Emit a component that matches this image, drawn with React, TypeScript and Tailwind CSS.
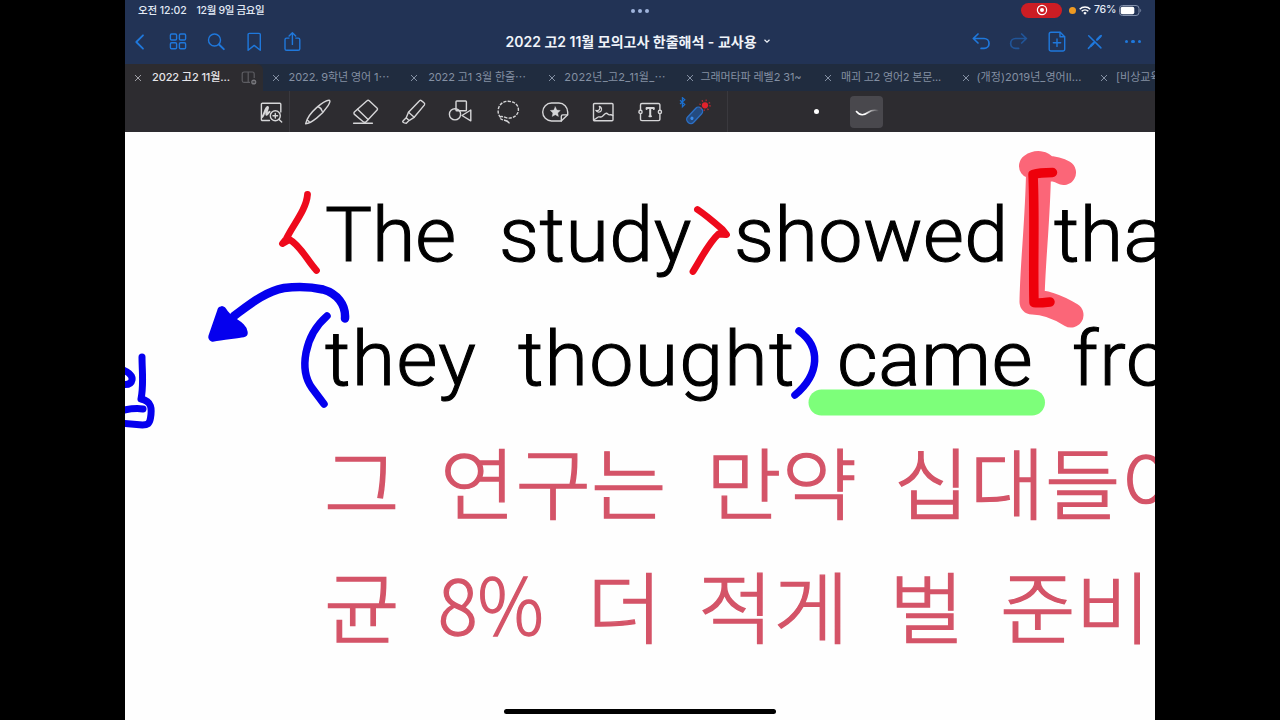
import React from 'react';

type IconProps = {
  children: React.ReactNode;
  className?: string;
};

// 24px stroke icon, drawn in the current text colour
function Icon({ children, className = 'size-6' }: IconProps) {
  return (
    <svg
      viewBox="0 0 24 24"
      fill="none"
      stroke="currentColor"
      strokeWidth="1.4"
      strokeLinecap="round"
      strokeLinejoin="round"
      className={`shrink-0 ${className}`}
    >
      {children}
    </svg>
  );
}

const leftActions = [
  { title: 'back', icon: <path d="M15 5.300 8.300 12 15 18.700" strokeWidth="1.800" /> },
  {
    title: 'grid',
    icon: (
      <>
        <rect x="4.400" y="4" width="6.200" height="6" rx="1.200" />
        <rect x="13.400" y="4" width="6.200" height="6" rx="1.200" />
        <rect x="4.400" y="12.700" width="6.200" height="6" rx="1.200" />
        <rect x="13.400" y="12.700" width="6.200" height="6" rx="1.200" />
      </>
    ),
  },
  {
    title: 'search',
    icon: (
      <>
        <circle cx="10.500" cy="10" r="6" />
        <path d="m15 14.500 4.800 4.600" strokeWidth="2" />
      </>
    ),
  },
  {
    title: 'bookmark',
    icon: <path d="M7.300 3.400h9.800a1.200 1.200 0 0 1 1.200 1.200v15.600L12.200 15.400l-6.100 4.800V4.600a1.200 1.200 0 0 1 1.200-1.200Z" />,
  },
  {
    title: 'share',
    icon: (
      <>
        <path d="M9 8.100H6.600A1.600 1.600 0 0 0 5 9.700v9a1.600 1.600 0 0 0 1.600 1.600h11.600a1.600 1.600 0 0 0 1.600-1.600v-9a1.600 1.600 0 0 0-1.600-1.600h-2.400" />
        <path d="M12.400 14.400V3M9.100 6l3.300-3.300L15.700 6" />
      </>
    ),
  },
];

const rightActions = [
  {
    title: 'undo',
    color: 'text-[#1f78dc]',
    icon: <path d="M9 4 4.300 8.500 9 13M4.600 8.500h10.500a4.900 4.900 0 0 1 0 9.900h-3" strokeWidth="1.700" />,
  },
  {
    title: 'redo',
    color: 'text-[#215599]',
    icon: <path d="m14.700 4 4.700 4.500-4.700 4.500M19.100 8.500H8.600a4.900 4.900 0 0 0 0 9.900h3" strokeWidth="1.700" />,
  },
  {
    title: 'add page',
    color: 'text-[#1f78dc]',
    icon: (
      <>
        <path d="M6 2.300h9.200l4.500 4.500v12.400a1.800 1.800 0 0 1-1.800 1.800H6a1.800 1.800 0 0 1-1.800-1.800V4.100A1.800 1.800 0 0 1 6 2.300Z" />
        <path d="M15 2.500v4.300h4.500M12 9v7.400M8.300 12.700h7.400" />
      </>
    ),
  },
  {
    title: 'read only',
    color: 'text-[#1f78dc]',
    icon: (
      <>
        <path d="m5.700 5.700 12.200 12.200" strokeWidth="1.500" />
        <path d="m5.400 18.400 6-6M13.800 10l4.400-4.400" strokeWidth="1.500" />
        <path d="m7.800 15.900 2.800-2.800M14.400 9.400l3-3" strokeWidth="2.200" />
      </>
    ),
  },
];

const tabs = [
  { title: '2022. 9학년 영어 1⋯', tracking: 'tracking-[-0.1px]' },
  { title: '2022 고1 3월 한줄⋯', tracking: 'tracking-[-0.1px]' },
  { title: '2022년_고2_11월_⋯', tracking: 'tracking-[0.25px]' },
  { title: '그래머타파 레벨2 31~', tracking: 'tracking-[-0.1px] -ml-0.5' },
  { title: '매괴 고2 영어2 본문...', tracking: 'tracking-[-0.2px]' },
  { title: '(개정)2019년_영어II...', tracking: 'tracking-[0.05px]' },
];

const tools = [
  {
    title: 'pen',
    icon: (
      <>
        <path d="M-.4 23.800C.8 18.500 5 12.500 10.600 7.600 15.500 3.300 20.500.2 23 .2c1.600.2.900 2.600-.9 5.400-3 4.600-7 9.100-11.200 12.300C6.800 21.200 2.800 23.600-.4 23.800Z" />
        <path d="M12 6.500c2 .8 3.600 2.600 4.300 4.900M1.600 20.300c.8.400 1.500 1.100 1.900 2" />
      </>
    ),
  },
  {
    title: 'eraser',
    icon: (
      <>
        <path d="M16.200.7 24 7.900a1.600 1.600 0 0 1 .1 2.200L13.400 21.400a2.500 2.500 0 0 1-3.500.1L1.500 14.400a1.600 1.600 0 0 1-.1-2.300L14 .8a1.600 1.600 0 0 1 2.200-.1Z" />
        <path d="m4.500 9.300 10.600 10.200M.6 23.300h18.800" />
      </>
    ),
  },
  {
    title: 'highlighter',
    icon: (
      <>
        <path d="M20.300.6 23 2.800a1.700 1.700 0 0 1 .3 2.300L13.200 17.300 7.500 12.300 18.300.9a1.400 1.400 0 0 1 2-.3Z" />
        <path d="m7.500 12.300-2.300 5.500L8 20.600l5.200-3.300M5.200 17.800 2 21c-.7.9 0 1.600 1.300 1.900l2 .3L8 20.600" />
      </>
    ),
  },
  {
    title: 'shapes',
    icon: (
      <>
        <rect x="8" y="1" width="10.400" height="9.800" rx=".8" />
        <circle cx="7" cy="14.300" r="5.600" />
        <path d="M22.800 10v10.800L14 15.500Z" />
      </>
    ),
  },
  {
    title: 'lasso',
    icon: (
      <>
        <path d="M4.600 17.500C-.4 12.500 2.300 1.300 12 1.300c6.500 0 10.400 3.600 10.400 8.400 0 6.300-6.600 9.600-12.300 8-3.300-1-5.400-2-6-.6-.5 1.600 2 2.700 4.700 3.300" strokeDasharray="3.200 1.200" strokeLinecap="butt" />
        <path d="M8.600 20.300c2 .4 3.500 1 4.500 2.700" />
      </>
    ),
  },
  {
    title: 'sticker',
    icon: (
      <>
        <path d="M18.200 21H8.500a8.800 9 0 0 1 0-18h7.400a8.800 9 0 0 1 8.800 9v2.700Z" />
        <path d="M24.500 14.900h-4.700a1.500 1.500 0 0 0-1.500 1.500V21" />
        <path d="m12.300 6.800 1.500 3.300 3.500.4-2.600 2.400.7 3.500-3.100-1.700-3.100 1.700.7-3.500-2.600-2.400 3.500-.4Z" fill="currentColor" strokeWidth=".4" />
      </>
    ),
  },
  {
    title: 'image',
    icon: (
      <>
        <rect x="2.500" y="3.500" width="19.500" height="17.200" rx="1" />
        <path d="M3 19.500c2.300-.4 3-2.300 4.600-2.600 1.700-.2 2.200.6 3.600-.4 1.900-1.400 2.800-3.400 4.200-3.200 1.300.2 1.600 1.600 3 1.600s2.100-.6 3.300.6" />
        <path d="M8.300 6.300c1.600 2.400-.3 5-3.500 4 1.200 2.600 5.200 2.300 5.700-.4.200-1.600-.6-3.100-2.200-3.600Z" strokeWidth="1.200" />
      </>
    ),
  },
  {
    title: 'text',
    icon: (
      <>
        <path d="M2.500 10V4.900a1.400 1.400 0 0 1 1.400-1.400h16.600a1.400 1.400 0 0 1 1.400 1.400V10M2.500 13.800v5.400a1.400 1.400 0 0 0 1.400 1.400h16.600a1.400 1.400 0 0 0 1.400-1.400v-5.400" />
        <circle cx="2.500" cy="11.900" r="1.600" />
        <circle cx="21.900" cy="11.900" r="1.600" />
        <path d="M8.600 8.900V8h7.200v.9M12.200 8v8.200M11.400 16.200H13" strokeWidth="2" />
      </>
    ),
  },
];

type Word = {
  text: string;
  className: string;
};

const englishLines: Word[][] = [
  [
    { text: 'The', className: 'w-[174px] tracking-[-0.1px]' },
    { text: 'study', className: 'w-[235px] tracking-[0.5px]' },
    { text: 'showed', className: 'w-[320px] tracking-[0.4px]' },
    { text: 'tha', className: 'w-[120px] tracking-[0.3px]' },
  ],
  [
    { text: 'they', className: 'w-[193px] tracking-[1.4px]' },
    { text: 'thought', className: 'w-[319px] tracking-[1.2px]' },
    { text: 'came', className: 'w-[235px] tracking-[0.5px]' },
    { text: 'fro', className: 'w-[120px] tracking-[1px]' },
  ],
];

const koreanLines: Word[][] = [
  [
    { text: '그', className: 'w-[116px]' },
    { text: '연구는', className: 'w-[266px]' },
    { text: '만약', className: 'w-[188px]' },
    { text: '십대들이', className: 'w-[300px]' },
  ],
  [
    { text: '균', className: 'w-[114px]' },
    { text: '8%', className: 'w-[149px] scale-x-90 -translate-y-[3px]' },
    { text: '더', className: 'w-[111px]' },
    { text: '적게', className: 'w-[191px]' },
    { text: '벌', className: 'w-[111px]' },
    { text: '준비', className: 'w-[160px]' },
  ],
];

function StatusBar() {
  return (
    <div className="grid h-5 grid-cols-[1fr_auto_1fr] items-center text-[10.5px] font-medium text-[#e3eaf5]">
      <div className="flex gap-2.5 pt-px pl-[13px] tracking-[-0.1px]">
        <span>오전 12:02</span>
        <span className="tracking-[-0.35px]">12월 9일 금요일</span>
      </div>
      <div className="flex gap-[3px] pt-0.5">
        <i className="size-1 rounded-full bg-[#9fb4dc]" />
        <i className="size-1 rounded-full bg-[#9fb4dc]" />
        <i className="size-1 rounded-full bg-[#9fb4dc]" />
      </div>
      <div className="flex items-center justify-end pr-[13px]">
        <div className="flex h-[15px] w-[41px] items-center justify-center rounded-full bg-[#cc1d24]">
          <svg viewBox="0 0 12 12" className="size-3">
            <circle cx="6" cy="6" r="4.600" fill="none" stroke="#fff" strokeWidth="1.200" />
            <circle cx="6" cy="6" r="2" fill="#fff" />
          </svg>
        </div>
        <i className="ml-[7px] size-[7px] rounded-full bg-[#ee9a22]" />
        <svg viewBox="0 0 12 9" className="ml-[3px] h-[9px] w-3" fill="none" stroke="#fff" strokeWidth="1.500">
          <path d="M.7 3.200a7.500 7.500 0 0 1 10.600 0M2.700 5.300a4.700 4.700 0 0 1 6.600 0" />
          <path d="M4.300 6.900a2.400 2.400 0 0 1 3.400 0L6 8.700Z" fill="#fff" stroke="none" />
        </svg>
        <span className="ml-[3px] w-[23px] whitespace-nowrap tracking-tight">76%</span>
        <svg viewBox="0 0 23 11" className="ml-0.5 h-[11px] w-[23px]">
          <rect x=".5" y=".5" width="19.500" height="10" rx="3" fill="none" stroke="#8391ad" />
          <rect x="1.700" y="1.700" width="13.600" height="7.600" rx="1.800" fill="#fff" />
          <path d="M21.300 3.800v3.400c1.200-.6 1.200-2.800 0-3.400Z" fill="#8391ad" />
        </svg>
      </div>
    </div>
  );
}

function Header() {
  return (
    <div className="grid h-11 grid-cols-[1fr_auto_1fr] items-center">
      <div className="-ml-1 flex text-[#1f78dc]">
        {leftActions.map((action) => (
          <div key={action.title} className="flex w-[38px] justify-center">
            <Icon>{action.icon}</Icon>
          </div>
        ))}
      </div>
      <div className="flex items-center gap-1.5 pr-1 pb-0.5 text-[14px] font-semibold whitespace-nowrap text-[#f0f4fa]">
        <span>2022 고2 11월 모의고사 한줄해석 - 교사용</span>
        <svg viewBox="0 0 8 8" className="size-2" fill="none" stroke="currentColor" strokeWidth="1.200">
          <path d="m1.500 2.800 2.500 2.400 2.500-2.400" />
        </svg>
      </div>
      <div className="flex justify-end pr-[3px]">
        {rightActions.map((action) => (
          <div key={action.title} className={`flex w-[38px] justify-center ${action.color}`}>
            <Icon>{action.icon}</Icon>
          </div>
        ))}
        <div className="flex h-[23px] w-[38px] items-center justify-center gap-[3px]">
          <i className="size-[3.5px] rounded-full bg-[#1f78dc]" />
          <i className="size-[3.5px] rounded-full bg-[#1f78dc]" />
          <i className="size-[3.5px] rounded-full bg-[#1f78dc]" />
        </div>
      </div>
    </div>
  );
}

function CloseIcon() {
  return (
    <svg viewBox="0 0 8 8" className="size-2 shrink-0" fill="none" stroke="currentColor" strokeWidth="1">
      <path d="m1 1 6 6M7 1 1 7" />
    </svg>
  );
}

function Tabs() {
  return (
    <div className="flex h-[27px] overflow-hidden bg-[#202c3f] text-[11px] whitespace-nowrap text-[#8490a3]">
      <div className="flex w-[138px] shrink-0 items-center rounded-tr-md bg-[#2d2c30] pl-[9px] text-[#e6e6ea]">
        <span className="text-[#a0a0a6]">
          <CloseIcon />
        </span>
        <span className="ml-2.5 w-[89px] font-medium tracking-[-0.1px]">2022 고2 11월...</span>
        <svg viewBox="0 0 16 14" className="h-3.5 w-4" fill="none" stroke="#5d5d62" strokeWidth="1.200">
          <path d="M9 11.400H3a1.800 1.800 0 0 1-1.800-1.800V2.800A1.800 1.800 0 0 1 3 1h8.400a1.800 1.800 0 0 1 1.800 1.800V7M7.200 1v10.400" />
          <circle cx="12.800" cy="11" r="2.600" fill="#77777c" stroke="none" />
          <path d="M11.500 11h2.600" stroke="#2d2c30" />
        </svg>
      </div>
      {tabs.map((tab) => (
        <div key={tab.title} className="flex w-[138px] shrink-0 items-center pl-[9px]">
          <CloseIcon />
          <span className={`w-[118px] text-center ${tab.tracking}`}>{tab.title}</span>
        </div>
      ))}
      <div className="flex w-[138px] shrink-0 items-center pl-[9px]">
        <CloseIcon />
        <span className="ml-2">[비상교육</span>
      </div>
    </div>
  );
}

function Toolbar() {
  return (
    <div className="flex h-[41px] items-center bg-[#2d2c30] text-[#d6d6d8]">
      <div className="ml-[134px] flex h-full w-[31px] items-center border-r border-[#3a393e]">
        <Icon>
          <path d="M10.500 20.500H3.400a1 1 0 0 1-1-1V4.200a1 1 0 0 1 1-1h17.400a1 1 0 0 1 1 1V12" />
          <path d="M3.300 17C5.300 14.500 6.500 7.300 8.500 7c1.800-.2-2.400 7.300-1 7.800 1.100.3 1.600-2.300 3-3" strokeWidth="2" />
          <circle cx="16.300" cy="15.700" r="5" />
          <path d="M14 15.700h4.600M16.300 13.400V18M20 19.400l2.700 2.700" />
        </Icon>
      </div>
      <div className="ml-1 flex">
        {tools.map((tool) => (
          <div key={tool.title} className="flex w-[47.5px] justify-center">
            <Icon className="size-6 overflow-visible">{tool.icon}</Icon>
          </div>
        ))}
      </div>
      <div className="flex h-full w-[54px] items-center border-r border-[#3a393e] pl-[5px]">
        <svg viewBox="0 0 34 30" className="h-[30px] w-[34px] shrink-0" fill="none">
          <path d="m1 3.200 4.800 4.300-2.400 2.300V.6L5.800 2.700 1 7" stroke="#1b6fce" strokeWidth="1.200" />
          <g transform="rotate(-47 16 18)">
            <rect x="6" y="14" width="19" height="8" rx="3.500" fill="#244b80" stroke="#2c6fc4" strokeWidth="1.300" />
            <circle cx="11.500" cy="18" r="1.600" fill="#3b8bea" />
          </g>
          <circle cx="26" cy="8.300" r="5" stroke="#b62a31" strokeWidth="1.600" strokeDasharray="1.200 2.730" />
          <circle cx="26" cy="8.300" r="3.100" fill="#e3222d" />
        </svg>
      </div>
      <i className="ml-[86px] size-[5px] rounded-full bg-white" />
      <div className="ml-[31px] flex h-8 w-[33px] items-center justify-center rounded-[4px] bg-[#49484d]">
        <svg viewBox="0 0 24 10" className="h-2.5 w-6" fill="none">
          <defs>
            <linearGradient id="ink" x1="0" x2="1">
              <stop offset=".4" stopColor="#fff" />
              <stop offset="1" stopColor="#fff" stopOpacity=".1" />
            </linearGradient>
          </defs>
          <path d="M1.500 4.500c3 3.800 7.300 4 11.500 1 3-2.200 5.500-2.800 9.500-2" stroke="url(#ink)" strokeWidth="1.600" strokeLinecap="round" />
        </svg>
      </div>
    </div>
  );
}

function Ink() {
  return (
    <svg
      viewBox="125 132 1030 588"
      className="absolute inset-0 h-[588px] w-[1030px]"
      fill="none"
      strokeLinecap="round"
      strokeLinejoin="round"
    >
      <path d="M821.500 402.500H1032" stroke="#7dff7a" strokeWidth="26" />
      {/* bracket */}
      <path
        d="M1063.500 172.500c-5-3-10-4-17-4-4-6-10-6-15-2.500 6 2 8 3 7 8-1 50-6 90-6.500 128 14 0 26 5 39 13"
        stroke="#fb6678"
        strokeWidth="25"
      />
      <path d="M1052.500 172.500c-6 0-13 0-19.500 2 2 40 0 86 1 128 5 1 11 0 16-.5" stroke="#ee000b" strokeWidth="9.500" />
      {/* angle marks */}
      <g stroke="#ee0a1c" strokeWidth="6.800">
        <path d="M307.500 194.500c-1 15-15 31-21 44l-4 5 7-4c11 6 17 20 27 31" />
        <path d="M697.500 209.500c9 6 17 13 25 20l4 5-8-.5c-10 9-17 24-25.500 37.500" />
      </g>
      {/* subject clause */}
      <g stroke="#0500ee" strokeWidth="8.500">
        <path d="M345 318.500c1-14-8-25-22-29-13-3-28-3-39-1.500-20 4-35 17-50 28" />
        <path d="m222 311-9 26c8-2 22-3 30-4.500-1-8-14-9-21-21.500l2 17 8 2" fill="#0500ee" strokeWidth="9.500" />
        <path d="M327 316c-23 20-28 54-15 72l12 16" strokeWidth="7.500" />
        <path d="M799 331c22 16 21 43-4 64" strokeWidth="7.500" />
      </g>
      {/* margin note */}
      <g stroke="#0500ee" strokeWidth="7">
        <path d="M142 357c0 14 2 28-1 42M120 369c7 2 13 6 12 11-1 5-7 5-12 4M120 411c8-2 16-3 23-2M141 399c11 2 11 10 9.500 19-1 6-3 7-8 7l-22-2" />
      </g>
    </svg>
  );
}

function Page() {
  return (
    <div className="relative h-[588px] overflow-hidden bg-[#fefefe] pt-10">
      <div className="pl-[200px] font-['Roboto',sans-serif] text-[79px] leading-[124px] font-light whitespace-nowrap text-black [-webkit-text-stroke:1.1px]">
        {englishLines.map((line, i) => (
          <div key={i} className="flex">
            {line.map((word) => (
              <span key={word.text} className={`shrink-0 origin-[0_89px] scale-y-95 ${word.className}`}>
                {word.text}
              </span>
            ))}
          </div>
        ))}
      </div>
      <div className="pl-[199px] font-['Noto_Sans_CJK_KR',sans-serif] text-[82px] leading-[124px] font-light whitespace-nowrap text-[#d45468] [-webkit-text-stroke:1.4px]">
        {koreanLines.map((line, i) => (
          <div key={i} className="flex">
            {line.map((word) => (
              <span key={word.text} className={`shrink-0 origin-[0_29px] scale-y-95 ${word.className}`}>
                {word.text}
              </span>
            ))}
          </div>
        ))}
      </div>
      <Ink />
      <div className="absolute bottom-[6.5px] left-[379px] h-[5px] w-[272px] rounded-full bg-black" />
    </div>
  );
}

export default function App() {
  return (
    <div className="flex h-[720px] w-[1280px] justify-center overflow-hidden bg-black font-['Inter','Noto_Sans_CJK_KR',sans-serif]">
      <div className="w-[1030px] overflow-hidden">
        <div className="bg-[#223355]">
          <StatusBar />
          <Header />
        </div>
        <Tabs />
        <Toolbar />
        <Page />
      </div>
    </div>
  );
}
